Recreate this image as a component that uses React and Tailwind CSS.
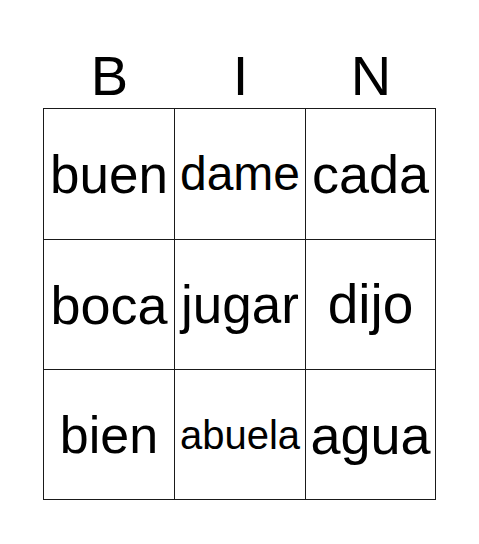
import React from "react";

const cells = [
  { w: "buen", cls: "text-[53px]" },
  { w: "dame", cls: "text-[48px]" },
  { w: "cada", cls: "text-[54px]" },
  { w: "boca", cls: "text-[54px]" },
  { w: "jugar", cls: "text-[53px]" },
  { w: "dijo", cls: "text-[55px]" },
  { w: "bien", cls: "text-[52px]" },
  { w: "abuela", cls: "text-[40px]" },
  { w: "agua", cls: "text-[54px]" },
];

export default function App() {
  return (
    <div
      className="w-[479px] h-[544px] bg-white text-black"
      style={{ fontFamily: '"Liberation Sans", Arial, sans-serif' }}
    >
      <div className="ml-[43px] pt-[48px]">
        <div className="grid grid-cols-[131px_131px_130px] pl-[1px] h-[56px] mb-[4px] text-[56px] leading-none">
          <div className="text-center">B</div>
          <div className="text-center">I</div>
          <div className="text-center">N</div>
        </div>
        <div className="grid w-[393px] grid-cols-[131px_131px_130px] grid-rows-[131px_130px_130px] border-l border-t border-[#1a1a1a]">
          {cells.map((c) => (
            <div
              key={c.w}
              className="flex items-center justify-center border-r border-b border-[#1a1a1a] overflow-visible"
            >
              <span className={`inline-block leading-none whitespace-nowrap ${c.cls}`}>
                {c.w}
              </span>
            </div>
          ))}
        </div>
      </div>
    </div>
  );
}
